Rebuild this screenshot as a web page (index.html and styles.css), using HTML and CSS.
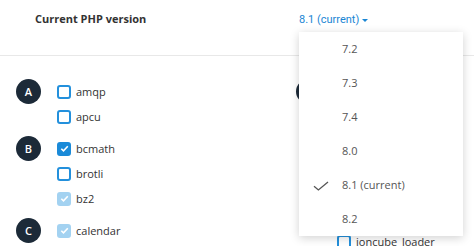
FILE: index.html
```html
<!DOCTYPE html>
<html lang="en">
<head>
<meta charset="utf-8">
<title>PHP extensions</title>
<link rel="stylesheet" href="styles.css">
</head>
<body>
<header class="header">
  <div class="header-label">Current PHP version</div>
  <div class="version">
    <span class="version-link">8.1 (current)<span class="caret"></span></span>
    <ul class="menu">
      <li class="menu-item"><span class="tick-slot"></span>7.2</li>
      <li class="menu-item"><span class="tick-slot"></span>7.3</li>
      <li class="menu-item"><span class="tick-slot"></span>7.4</li>
      <li class="menu-item"><span class="tick-slot"></span>8.0</li>
      <li class="menu-item"><span class="tick-slot"><svg class="tick" viewBox="0 0 16 10" width="16" height="10"><path d="M1 5.2 L5.4 9 L15 1" fill="none" stroke="#555" stroke-width="1.3"/></svg></span>8.1 (current)</li>
      <li class="menu-item"><span class="tick-slot"></span>8.2</li>
    </ul>
  </div>
</header>
<main class="columns">
  <div class="column">
    <div class="group">
      <span class="badge">A</span>
      <ul class="items">
        <li class="item"><span class="cb"></span>amqp</li>
        <li class="item"><span class="cb"></span>apcu</li>
      </ul>
    </div>
    <div class="group">
      <span class="badge">B</span>
      <ul class="items">
        <li class="item"><span class="cb checked"><svg viewBox="0 0 13 13" width="13" height="13"><path d="M3.3 6.7 L5.5 8.9 L9.8 4.3" fill="none" stroke="#fff" stroke-width="1.6"/></svg></span>bcmath</li>
        <li class="item"><span class="cb"></span>brotli</li>
        <li class="item"><span class="cb locked"><svg viewBox="0 0 13 13" width="13" height="13"><path d="M3.3 6.7 L5.5 8.9 L9.8 4.3" fill="none" stroke="#fff" stroke-width="1.6"/></svg></span>bz2</li>
      </ul>
    </div>
    <div class="group">
      <span class="badge">C</span>
      <ul class="items">
        <li class="item"><span class="cb locked"><svg viewBox="0 0 13 13" width="13" height="13"><path d="M3.3 6.7 L5.5 8.9 L9.8 4.3" fill="none" stroke="#fff" stroke-width="1.6"/></svg></span>calendar</li>
      </ul>
    </div>
  </div>
  <div class="column">
    <div class="group">
      <span class="badge">I</span>
      <ul class="items">
        <li class="item"><span class="cb"></span>iconv</li>
        <li class="item"><span class="cb"></span>igbinary</li>
        <li class="item"><span class="cb"></span>imagick</li>
        <li class="item"><span class="cb"></span>imap</li>
        <li class="item"><span class="cb"></span>inotify</li>
        <li class="item"><span class="cb"></span>intl</li>
        <li class="item"><span class="cb"></span>ioncube_loader</li>
      </ul>
    </div>
  </div>
</main>
</body>
</html>
```
FILE: styles.css
```css
* { box-sizing: border-box; }
html, body { margin: 0; padding: 0; background: #fff; }
body {
  font-family: "Open Sans", "Liberation Sans", sans-serif;
  font-size: 11px;
  color: #333;
  overflow: hidden;
  width: 474px;
  height: 246px;
}
ul { list-style: none; margin: 0; padding: 0; }

.header {
  display: flex;
  align-items: flex-start;
  height: 56px;
  padding: 11px 0 0 35px;
  border-bottom: 1px solid #e8e8e8;
  line-height: 16px;
}
.header-label {
  width: 264px;
  font-weight: 700;
  color: #333;
}
.version { position: relative; }
.version-link {
  display: inline-flex;
  align-items: center;
  font-family: Roboto, "Liberation Sans", sans-serif;
  color: #1a86d4;
}
.caret {
  width: 0;
  height: 0;
  margin-left: 3px;
  margin-top: 1px;
  border-left: 3px solid transparent;
  border-right: 3px solid transparent;
  border-top: 3px solid #1a86d4;
}
.menu {
  position: absolute;
  top: 21px;
  left: 0;
  width: 164px;
  background: #fff;
  box-shadow: 0 2px 9px rgba(0, 0, 0, 0.18);
  z-index: 10;
}
.menu-item {
  display: flex;
  align-items: center;
  height: 34px;
  padding-left: 14px;
  color: #555;
}
.tick-slot {
  display: flex;
  align-items: center;
  width: 29px;
  height: 10px;
  margin-top: 2px;
}

.columns {
  display: grid;
  grid-template-columns: 280px 180px;
  padding: 23px 0 0 16px;
}
.column {
  display: flex;
  flex-direction: column;
  gap: 7px;
}
.group {
  display: flex;
  align-items: flex-start;
  gap: 16px;
}
.badge {
  display: flex;
  align-items: center;
  justify-content: center;
  width: 25px;
  height: 25px;
  border-radius: 50%;
  background: #1c2a38;
  color: #fff;
  font-weight: 600;
  font-size: 11px;
}
.item {
  display: flex;
  align-items: center;
  height: 25px;
  white-space: nowrap;
}
.cb {
  display: flex;
  align-items: center;
  justify-content: center;
  width: 14px;
  height: 14px;
  margin-right: 5px;
  border: 2px solid #2390dc;
  border-radius: 3px;
  background: #fff;
}
.cb svg { flex: none; }
.cb.checked { background: #1a8ad8; border-color: #1a8ad8; }
.cb.locked { background: #a3d2f1; border-color: #a3d2f1; }
```
